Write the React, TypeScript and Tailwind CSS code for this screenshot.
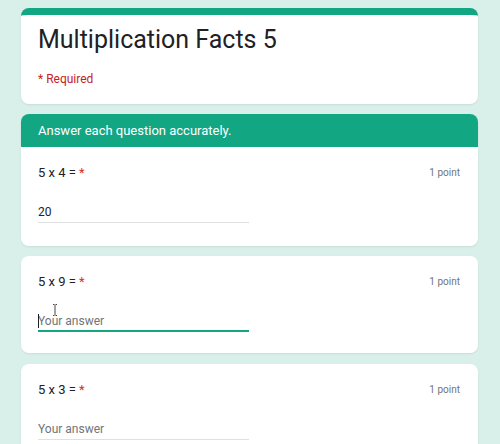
import React from "react";

const font = { fontFamily: "Roboto, 'Noto Sans', Arial, sans-serif" };

function Question({ label, value, focused, height }: { label: string; value?: string; focused?: boolean; height: string }) {
  return (
    <div className={`relative bg-white ${height} px-[17px]`}>
      <div className="flex justify-between pt-[17px]">
        <div className="text-[13px] leading-[18px] text-[#202124]">
          {label} <span className="text-[#d93025]">*</span>
        </div>
        <div className="text-[10px] leading-[18px] text-[#70757a] pr-[1px]">1 point</div>
      </div>
      <div className="mt-[22px] w-[211px] relative">
        <div className={`text-[12px] leading-[16px] ${value ? "text-[#202124]" : "text-[#70757a]"}`}>
          {value ?? "Your answer"}
        </div>
        {focused ? (
          <>
            <div className="absolute left-0 top-[1px] h-[14px] w-px bg-[#202124]" />
            <div className="mt-[1px] h-[2px] bg-[#13a683]" />
          </>
        ) : (
          <div className="mt-[2px] h-px bg-[#e0e0e0]" />
        )}
        {focused && (
          <svg className="absolute left-[14px] top-[-9px]" width="6" height="12" viewBox="0 0 6 12">
            <path d="M1 0.5h1.5M3.5 0.5H5M3 1v10M1 11.5h1.5M3.5 11.5H5" stroke="#444" strokeWidth="1" fill="none" />
          </svg>
        )}
      </div>
    </div>
  );
}

export default function App() {
  return (
    <div className="h-[444px] overflow-hidden bg-[#d9efea] pl-[21px] pr-[22px] pt-[8px]" style={font}>
      <div className="flex flex-col">
        <div className="h-[96px] rounded-lg bg-white border-t-[7px] border-[#13a683] shadow-[0_1px_2px_rgba(0,0,0,0.08)] px-[17px]">
          <div className="pt-[8px] text-[25px] leading-[34px] text-[#202124]">Multiplication Facts 5</div>
          <div className="mt-[14px] text-[12px] leading-[16px] text-[#c5221f]">* Required</div>
        </div>

        <div className="mt-[10px] rounded-lg overflow-hidden shadow-[0_1px_2px_rgba(0,0,0,0.08)]">
          <div className="h-[33px] bg-[#13a683] px-[17px] flex items-center text-[13px] text-white">
            Answer each question accurately.
          </div>
          <Question label="5 x 4 =" value="20" height="h-[99px]" />
        </div>

        <div className="mt-[10px] rounded-lg overflow-hidden shadow-[0_1px_2px_rgba(0,0,0,0.08)]">
          <Question label="5 x 9 =" focused height="h-[97px]" />
        </div>

        <div className="mt-[11px] rounded-lg overflow-hidden shadow-[0_1px_2px_rgba(0,0,0,0.08)]">
          <Question label="5 x 3 =" height="h-[100px]" />
        </div>
      </div>
    </div>
  );
}
